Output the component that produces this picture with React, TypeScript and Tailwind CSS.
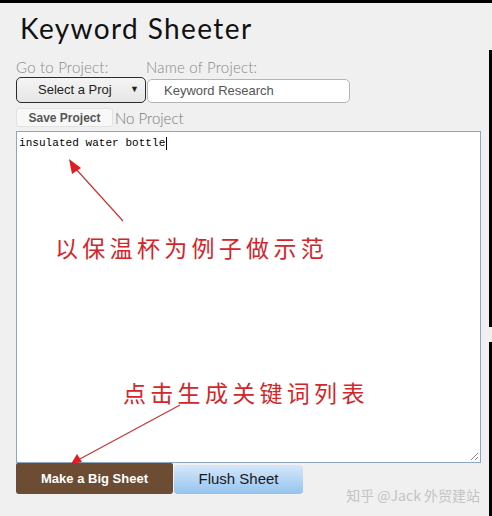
const sans = { fontFamily: '"Liberation Sans", Arial, sans-serif' };

function Arrows() {
  return (
    <svg className="pointer-events-none absolute inset-0" width="492" height="516" viewBox="0 0 492 516">
      <g stroke="#c4353a" strokeWidth="1.2" fill="#e01e1e">
        <line x1="123" y1="218" x2="75" y2="165" />
        <polygon points="69,156 81,165 72,171" stroke="none" />
        <line x1="180" y1="402" x2="78" y2="457" />
        <polygon points="71,461 77,451 82,459" stroke="none" />
      </g>
    </svg>
  );
}

export default function App() {
  const note = 'absolute text-[23px] tracking-[4.3px] text-[#d3262a] leading-none whitespace-nowrap';
  return (
    <div className="relative flex h-[516px] w-[492px] overflow-hidden border-t-[3px] border-black bg-[#f0f0f0]">
      <div className="flex flex-1 flex-col pl-4 pr-2">
        <h1
          className="ml-[4px] mt-[8px] text-[28px] leading-[34px] tracking-[1.4px] text-[#111]"
          style={{ fontFamily: 'Lato, "Open Sans", sans-serif' }}
        >
          Keyword Sheeter
        </h1>

        <div
          className="mt-[13px] flex text-[15px] font-light leading-[18px] text-[#8a8a8a]"
          style={{ fontFamily: 'Lato, "Open Sans", sans-serif' }}
        >
          <span className="w-[130px] tracking-[0.2px]">Go to Project:</span>
          <span className="tracking-[0.2px]">Name of Project:</span>
        </div>

        <div className="mt-[1px] flex items-end" style={sans}>
          <div className="flex h-[26px] w-[130px] items-center justify-between rounded-[5px] border border-[#2b2b2b] bg-gradient-to-b from-[#f4f4f4] to-[#e6e6e6] pl-[21px] pr-[6px] text-[13px] text-[#222]">
            <span>Select a Proj</span>
            <span className="text-[9px]">▼</span>
          </div>
          <div className="ml-[1px] flex h-[24px] w-[203px] items-center rounded-[5px] border border-[#b5b5b5] bg-white pl-[16px] text-[13px] text-[#555]">
            Keyword Research
          </div>
        </div>

        <div className="mt-[5px] flex items-center">
          <div
            className="flex h-[19px] w-[97px] items-center justify-center rounded-[3px] border border-[#e2e2e2] bg-[#f8f8f8] text-[12px] font-bold text-[#555]"
            style={sans}
          >
            Save Project
          </div>
          <span
            className="ml-[2px] text-[15px] font-light leading-[18px] text-[#7a7a7a]"
            style={{ fontFamily: 'Lato, "Open Sans", sans-serif' }}
          >
            No Project
          </span>
        </div>

        <div className="relative mt-[4px] h-[332px] w-[465px] border border-[#8da6c8] bg-white px-[2px] py-[4px]">
          <div
            className="flex items-center text-[11px] leading-[14px] tracking-[0.05px] text-black"
            style={{ fontFamily: '"Liberation Mono", monospace' }}
          >
            insulated water bottle
            <span className="ml-[1px] inline-block h-[13px] w-px bg-black" />
          </div>
          <svg className="absolute bottom-[1px] right-[1px]" width="11" height="11" viewBox="0 0 11 11">
            <path d="M10 3L3 10M10 7L7 10" stroke="#888" strokeWidth="1" />
          </svg>
        </div>

        <div className="flex items-start" style={sans}>
          <div className="flex h-[31px] w-[157px] items-center justify-center rounded-b-[3px] rounded-t-[2px] bg-[#6c4c32] text-[13px] font-bold text-white">
            Make a Big Sheet
          </div>
          <div className="ml-[1px] mt-[2px] flex h-[29px] w-[129px] items-center justify-center rounded-[4px] bg-gradient-to-b from-[#d5e8fb] to-[#95c3ee] text-[15px] text-[#1a1a1a]">
            Flush Sheet
          </div>
          <span
            className="ml-auto mr-[1px] mt-[22px] text-[14px] text-[#c4c4c4]"
            style={{ fontFamily: '"Noto Sans CJK SC", sans-serif' }}
          >
            知乎 @Jack 外贸建站
          </span>
        </div>
      </div>

      <div className="flex w-[3px] flex-col pt-[47px]">
        <div className="h-[277px] bg-black" />
        <div className="h-[15px]" />
        <div className="flex-1 bg-black" />
      </div>

      <span className={note} style={{ left: 55, top: 233, fontFamily: '"Noto Sans CJK SC", sans-serif' }}>
        以保温杯为例子做示范
      </span>
      <span className={note} style={{ left: 123, top: 378, fontFamily: '"Noto Sans CJK SC", sans-serif' }}>
        点击生成关键词列表
      </span>
      <Arrows />
    </div>
  );
}
